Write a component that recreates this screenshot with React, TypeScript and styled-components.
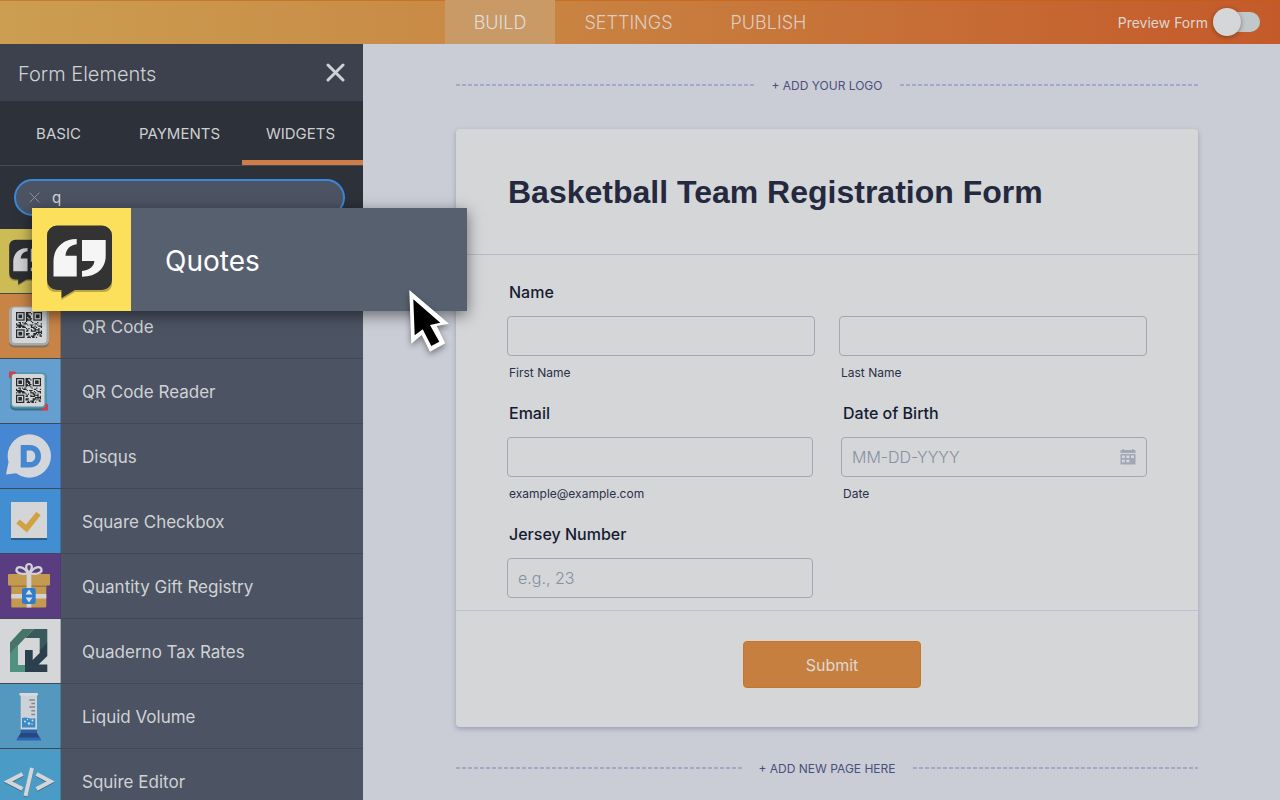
import React from "react";
import styled, { createGlobalStyle } from "styled-components";

const GlobalStyle = createGlobalStyle`
  *, *::before, *::after { box-sizing: border-box; }
  body {
    margin: 0;
    background: #cacdd6;
    font-family: Inter, "Liberation Sans", sans-serif;
    color: #161b33;
  }
  button, input { font: inherit; }
`;

/* ---------- Page ---------- */

const Page = styled.div`
  position: relative;
  display: flex;
  flex-direction: column;
  height: 100vh;
  overflow: hidden;
`;

const Body = styled.div`
  display: flex;
  flex: 1;
  min-height: 0;
`;

/* ---------- Top bar ---------- */

const TopBar = styled.header`
  flex: none;
  display: grid;
  grid-template-columns: 1fr auto 1fr;
  height: 44px;
  background: linear-gradient(90deg, #cb9e51 0%, #c98c46 32%, #c77238 66%, #c45a2a 100%);
  box-shadow: inset 0 1px 0 rgba(200, 90, 10, 0.5);
`;

const Nav = styled.nav`
  grid-column: 2;
  display: flex;
`;

const NavLink = styled.a<{ $active?: boolean }>`
  display: flex;
  align-items: center;
  padding: 0 29px;
  font-size: 18px;
  font-weight: 300;
  color: ${(p) => (p.$active ? "#dfdddb" : "#dccdc0")};
  background: ${(p) => (p.$active ? "#c99a66" : "transparent")};
  text-decoration: none;
`;

const Preview = styled.label`
  justify-self: end;
  display: flex;
  align-items: center;
  gap: 5px;
  padding-right: 20px;
  font-size: 14px;
  color: #ddd5d0;
`;

const Toggle = styled.input`
  appearance: none;
  display: flex;
  align-items: center;
  width: 47px;
  height: 28px;
  margin: 0;

  &::before {
    content: "";
    z-index: 1;
    flex: none;
    width: 28px;
    height: 28px;
    border-radius: 50%;
    background: #d5d6d7;
    box-shadow: 0 1px 4px rgba(60, 30, 10, 0.5);
  }

  &::after {
    content: "";
    flex: none;
    width: 38px;
    height: 20px;
    margin-left: -19px;
    border-radius: 10px;
    background: #c1c8ca;
    box-shadow: 0 0 1px #b08030;
  }
`;

/* ---------- Side panel ---------- */

const Panel = styled.aside`
  flex: none;
  display: flex;
  flex-direction: column;
  width: 363px;
  background: #2d3139;
  overflow: hidden;
`;

const PanelHead = styled.div`
  flex: none;
  display: flex;
  align-items: center;
  justify-content: space-between;
  height: 57px;
  padding: 0 18px;
  background: #3c414d;
  color: #cfd1d4;
`;

const PanelTitle = styled.h2`
  margin: 0;
  font-size: 20px;
  font-weight: 300;
  padding-top: 2px;
`;

const IconButton = styled.button`
  display: flex;
  padding: 0;
  border: 0;
  background: none;
  color: inherit;
`;

const Tabs = styled.div`
  flex: none;
  display: grid;
  grid-template-columns: repeat(3, 1fr);
  height: 65px;
  border-bottom: 1px solid #454b57;
`;

const Tab = styled.button<{ $active?: boolean }>`
  padding: 5px 4px 0 0;
  border: 0;
  border-bottom: 5px solid ${(p) => (p.$active ? "#cd7d45" : "transparent")};
  background: none;
  color: #cdcfd1;
  font-size: 15px;
`;

const SearchArea = styled.div`
  flex: none;
  padding: 13px 18px 13px 14px;
`;

const SearchBox = styled.div`
  display: flex;
  align-items: center;
  gap: 11px;
  height: 37px;
  padding: 0 14px 0 12px;
  border: 2px solid #3b88d8;
  border-radius: 19px;
  background: #4c5362;
  color: #8b93a1;
`;

const SearchInput = styled.input`
  flex: 1;
  min-width: 0;
  padding: 0;
  border: 0;
  outline: 0;
  background: none;
  color: #d3d5d8;
  font-size: 15px;
`;

const List = styled.ul`
  margin: 0;
  padding: 0;
  list-style: none;
`;

const Row = styled.li`
  display: flex;
  align-items: center;
  height: 65px;
  border-bottom: 1px solid #424854;
  background: #4c5362;
  color: #d0d2d5;
  font-size: 17px;
`;

const RowName = styled.span`
  padding-top: 2px;
`;

const Tile = styled.span<{ $bg: string }>`
  flex: none;
  display: flex;
  width: 61px;
  height: 64px;
  margin-right: 21px;
  background: ${(p) => p.$bg};
  border-right: 1px solid rgba(50, 56, 68, 0.3);

  svg { flex: none; }
`;

/* ---------- Canvas ---------- */

const Canvas = styled.main`
  flex: 1;
  display: flex;
  flex-direction: column;
  min-width: 0;
  padding: 31px 82px 20px 93px;
  overflow: hidden;
`;

const AddButton = styled.button`
  display: flex;
  align-items: center;
  gap: 17px;
  width: 100%;
  height: 20px;
  padding: 0;
  border: 0;
  background: none;
  color: #4b4f7c;
  font-size: 12px;
  white-space: nowrap;

  &::before,
  &::after {
    content: "";
    flex: 1;
    height: 2px;
    background: repeating-linear-gradient(90deg, #a6a8c8 0 4px, transparent 4px 6px);
  }
`;

const FormCard = styled.form`
  flex: none;
  margin: 34px 0 31px;
  border-radius: 4px;
  background: #d4d6d7;
  box-shadow: 0 2px 5px rgba(84, 86, 130, 0.4);
`;

const FormHead = styled.div`
  display: flex;
  align-items: center;
  height: 126px;
  padding: 0 52px;
  border-bottom: 1px solid #b7bac4;
`;

const FormTitle = styled.h1`
  margin: 0;
  font-family: "Liberation Sans", Arial, sans-serif;
  font-size: 32px;
  line-height: 40px;
  font-weight: 700;
  color: #24293f;
`;

const Fields = styled.div`
  display: flex;
  flex-direction: column;
  gap: 21px;
  padding: 27px 51px 12px;
  border-bottom: 1px solid #bfc0cf;
`;

const FieldRow = styled.div<{ $gap: number }>`
  display: grid;
  grid-template-columns: 1fr 1fr;
  column-gap: ${(p) => p.$gap}px;
`;

const NameGroup = styled.fieldset`
  margin: 0;
  padding: 0;
  border: 0;
  min-width: 0;
`;

const Field = styled.div`
  display: flex;
  flex-direction: column;
`;

const labelStyle = `
  display: block;
  margin-bottom: 14px;
  padding: 0 2px;
  font-size: 16px;
  line-height: 20px;
  font-weight: 500;
  color: #161b33;
`;

const Label = styled.label`${labelStyle}`;
const Legend = styled.legend`${labelStyle}`;

const InputBox = styled.div`
  display: flex;
  align-items: center;
  height: 40px;
  padding: 0 10px;
  border: 1px solid #a3a7b4;
  border-radius: 4px;
  color: #a0a7b7;
`;

const TextInput = styled.input`
  flex: 1;
  min-width: 0;
  padding: 0;
  border: 0;
  outline: 0;
  background: none;
  color: #161b33;
  font-size: 16px;

  &::placeholder { color: #8790a4; opacity: 1; font-weight: 300; }
`;

const Hint = styled.label`
  margin-top: 8px;
  padding: 0 2px;
  font-size: 12px;
  line-height: 18px;
  color: #2b304a;
`;

const FormFoot = styled.div`
  display: flex;
  justify-content: center;
  padding: 30px 0 39px 10px;
`;

const Submit = styled.button`
  width: 178px;
  height: 47px;
  padding: 0;
  border: 1px solid #c9762b;
  border-radius: 4px;
  background: #c77f3f;
  color: #ddd8d2;
  font-size: 16px;
`;

/* ---------- Dragged widget ---------- */

const DragCard = styled.div`
  position: absolute;
  left: 32px;
  top: 208px;
  display: flex;
  align-items: center;
  gap: 34px;
  width: 435px;
  height: 103px;
  background: #57606f;
  box-shadow: 0 4px 14px rgba(0, 0, 0, 0.5);
  color: #fff;
  font-size: 28px;
`;

const DragName = styled.span`
  padding-top: 3px;
`;

const DragTile = styled.span`
  display: flex;
  width: 99px;
  height: 103px;
  background: #fcdf5a;
`;

const Cursor = styled.svg`
  position: absolute;
  left: 400px;
  top: 282px;
  filter: drop-shadow(0 3px 3px rgba(0, 0, 0, 0.4));
`;

/* ---------- Drawings ---------- */

function QuoteMark({ width, dim }: { width: number; dim?: boolean }) {
  const dark = dim ? "#2c2e31" : "#333333";
  const light = dim ? "#cfd1d3" : "#f5f5f5";
  return (
    <svg width={width} height={(width * 103) / 99} viewBox="0 0 99 103" aria-hidden="true">
      <path d="M23 19H72A8 8 0 0 1 80 27V76A8 8 0 0 1 72 84H43L29.5 92V84H23A8 8 0 0 1 15 76V27A8 8 0 0 1 23 19Z" fill="#000" opacity="0.25" />
      <path d="M25 17.500H70A10 10 0 0 1 80 27.500V72A10 10 0 0 1 70 82H43L29.500 90V82H25A10 10 0 0 1 15 72V27.500A10 10 0 0 1 25 17.500Z" fill={dark} />
      <path d="M21.500 68.500H44.700V47.700H33.500C34 41 38 37 44.700 36.200V31C30 31 21.500 41 21.500 53Z" fill={light} />
      <path d="M50 32H73.700V48C73.700 60 65 68.700 50 68.700V63C58 62 62.300 58 62.300 53H50Z" fill={light} />
    </svg>
  );
}

const QR_SIZE = 21;

function qrPath() {
  let seed = 71;
  let d = "";
  const inFinder = (x: number, y: number) =>
    (x < 8 && y < 8) || (x >= QR_SIZE - 8 && y < 8) || (x < 8 && y >= QR_SIZE - 8);
  for (let y = 0; y < QR_SIZE; y++) {
    for (let x = 0; x < QR_SIZE; x++) {
      seed = (seed * 1103515245 + 12345) % 2147483648;
      if (!inFinder(x, y) && (seed >> 12) % 100 < 50) d += `M${x} ${y}h1v1h-1z`;
    }
  }
  return d;
}

const QR_DATA = qrPath();

function QrGlyph({ x, y, size }: { x: number; y: number; size: number }) {
  return (
    <svg x={x} y={y} width={size} height={size} viewBox="0 0 21 21">
      <path d={QR_DATA} fill="#24272b" />
      {[[0, 0], [14, 0], [0, 14]].map(([fx, fy]) => (
        <g key={`${fx}-${fy}`}>
          <rect x={fx + 0.5} y={fy + 0.5} width="6" height="6" fill="none" stroke="#24272b" strokeWidth="1" />
          <rect x={fx + 2} y={fy + 2} width="3" height="3" fill="#24272b" />
        </g>
      ))}
    </svg>
  );
}

function TileSvg({ children }: { children: React.ReactNode }) {
  return (
    <svg width="61" height="64" viewBox="0 0 61 64" aria-hidden="true">
      {children}
    </svg>
  );
}

const QrIcon = () => (
  <TileSvg>
    <rect x="9" y="13.500" width="40" height="40" rx="5" fill="#80705f" />
    <rect x="9" y="12.500" width="40" height="39" rx="5" fill="#a5a9ac" />
    <rect x="12" y="13.500" width="34.500" height="35.500" rx="3" fill="#d3d5d6" />
    <QrGlyph x={16} y={18} size={26} />
  </TileSvg>
);

const QrReaderIcon = () => (
  <TileSvg>
    <path d="M9 19V12.800H15.500V19ZM41.500 45H48V51.200H41.500Z" fill="#cf3f4c" />
    <rect x="10" y="14.500" width="37" height="37" rx="5" fill="#3a6c88" />
    <rect x="10" y="13.500" width="37" height="36" rx="5" fill="#4f93ab" />
    <rect x="12" y="15" width="32.500" height="32.500" rx="3" fill="#d3d5d6" />
    <QrGlyph x={16} y={19} size={25} />
    <path d="M9 19V12.800H15.500V15H11.500V19ZM48 45V51.200H41.500V49H45.500V45Z" fill="#cf3f4c" />
  </TileSvg>
);

const DisqusIcon = () => (
  <TileSvg>
    <path d="M8.500 38L6 50.500L18 49Z" fill="#d3d6da" />
    <circle cx="29.300" cy="32" r="21.700" fill="#d3d6da" />
    <path fillRule="evenodd" fill="#4786d0" d="M20.700 21H29.500C36.500 21 41 25.500 41 32.200C41 39 36.500 43.500 29.500 43.500H20.700ZM26.700 26.500V38H29.500C33 38 35.300 36 35.300 32.200C35.300 28.500 33 26.500 29.500 26.500Z" />
  </TileSvg>
);

const CheckIcon = () => (
  <TileSvg>
    <rect x="11" y="14.500" width="36" height="36.500" fill="#2c5f86" />
    <rect x="11" y="13" width="36" height="36" fill="#d3d5d6" />
    <path d="M18 32.500L26.500 39.500L38.500 24.500" fill="none" stroke="#d0a242" strokeWidth="5.500" />
  </TileSvg>
);

const GiftIcon = () => (
  <TileSvg>
    <rect x="11.300" y="30" width="35" height="23.500" rx="1" fill="#c49a51" />
    <rect x="11.300" y="30" width="35" height="3" fill="#9c7840" />
    <rect x="8" y="20" width="42" height="11.500" rx="1" fill="#c49a51" />
    <path d="M11.300 40H46.300V44.500H11.300ZM26.700 19H31.300V53.500H26.700Z" fill="#d3d3d6" />
    <g fill="none" stroke="#d3d3d6" strokeWidth="2.200">
      <path d="M29 19C24.500 14 26 10 29 10C32 10 33.500 14 29 19Z" />
      <path d="M28 19.500C24 12 17.500 12 16.500 15.500C15.500 19 22 20.500 28 19.500Z" />
      <path d="M30 19.500C34 12 40.500 12 41.500 15.500C42.500 19 36 20.500 30 19.500Z" />
    </g>
    <rect x="22" y="34" width="13.700" height="16" rx="2" fill="#2f7cca" />
    <path d="M29 35.500L32.500 40.500H25.500ZM29 48.500L32.500 43.500H25.500Z" fill="#d9dce0" />
  </TileSvg>
);

const QuadernoIcon = () => (
  <TileSvg>
    <path d="M10 53V34L18 26.500V46H25V53Z" fill="#509280" />
    <path d="M10 34.500V23.500L22.500 10H34L25 19L18 26.500Z" fill="#477469" />
    <path d="M34 10H47.300V24L39.700 31.500V19H25Z" fill="#385a5c" />
    <path d="M47.300 23.500V37L38.500 45.500H47.300V53H25V31H32.700V41L39.700 34V31Z" fill="#2c3f4c" />
  </TileSvg>
);

const LiquidIcon = () => (
  <TileSvg>
    <rect x="20.700" y="11" width="16.300" height="35" fill="#cdd2d8" />
    <rect x="19.300" y="9" width="18.700" height="2.500" rx="1" fill="#d9dadc" />
    <path d="M29.300 16H35M31.300 19.500H35M29.300 23H35M31.300 26.700H35M31.300 30.500H35" stroke="#82878e" strokeWidth="1.500" />
    <path d="M22 34Q25 32.800 28.500 34T35.300 34V43.500H22Z" fill="#3a8ac8" />
    <g fill="#d3e0ea">
      <circle cx="25" cy="37.500" r="1" />
      <circle cx="29" cy="39.500" r="1.200" />
      <circle cx="32.500" cy="36.500" r="1" />
      <circle cx="27.500" cy="35.500" r="0.700" />
      <circle cx="32" cy="40" r="0.700" />
    </g>
    <rect x="20.700" y="45.500" width="16.300" height="4" fill="#2c5da6" />
    <path d="M20.700 49H37L41 55.500H16.700Z" fill="#24497f" />
    <path d="M18.200 53.500H39.700L41 55.500V56.500H16.700V55.500Z" fill="#2f66b4" />
  </TileSvg>
);

const SquireIcon = () => (
  <TileSvg>
    <g fill="none" strokeWidth="4">
      <path d="M22.500 26L8 33.500L22.500 41M36.500 26L50.500 33.500L36.500 41M32 20L25.500 48" stroke="#39708c" />
      <path d="M22.500 25L8 32.500L22.500 40M36.500 25L50.500 32.500L36.500 40M32 19L25.500 47" stroke="#d3d5d7" />
    </g>
  </TileSvg>
);

const Cross = ({ size, stroke }: { size: number; stroke: number }) => (
  <svg width={size} height={size} viewBox={`0 0 ${size} ${size}`} aria-hidden="true">
    <path
      d={`M2 2L${size - 2} ${size - 2}M${size - 2} 2L2 ${size - 2}`}
      stroke="currentColor"
      strokeWidth={stroke}
      strokeLinecap="round"
    />
  </svg>
);

const CalendarIcon = () => (
  <svg width="16" height="16" viewBox="0 0 16 16" fill="currentColor" aria-hidden="true">
    <path d="M2.500 0H4V1H12V0H13.500V1H15.500V4H0.500V1H2.500Z" />
    <path
      fillRule="evenodd"
      d="M0.500 5H15.500V15.500H0.500ZM2 6.500V9H4.800V6.500ZM6.300 6.500V9H9.500V6.500ZM11 6.500V9H14V6.500ZM2 10.700V13.300H4.800V10.700ZM6.300 10.700V13.300H9.500V10.700Z"
    />
  </svg>
);

const widgets = [
  { name: "Quotes", bg: "#cdbc56", icon: <QuoteMark width={61} dim /> },
  { name: "QR Code", bg: "#c88447", icon: <QrIcon /> },
  { name: "QR Code Reader", bg: "#649fd0", icon: <QrReaderIcon /> },
  { name: "Disqus", bg: "#4786d0", icon: <DisqusIcon /> },
  { name: "Square Checkbox", bg: "#418fd2", icon: <CheckIcon /> },
  { name: "Quantity Gift Registry", bg: "#5a3c80", icon: <GiftIcon /> },
  { name: "Quaderno Tax Rates", bg: "#d4d6d8", icon: <QuadernoIcon /> },
  { name: "Liquid Volume", bg: "#5498bf", icon: <LiquidIcon /> },
  { name: "Squire Editor", bg: "#4a9cc6", icon: <SquireIcon /> },
];

/* The widget being dragged shows its name on the drag card instead of in its row. */
const dragged = "Quotes";

export default function App() {
  return (
    <Page>
      <GlobalStyle />
      <TopBar>
        <Nav>
          <NavLink href="#build" $active>BUILD</NavLink>
          <NavLink href="#settings">SETTINGS</NavLink>
          <NavLink href="#publish">PUBLISH</NavLink>
        </Nav>
        <Preview>
          Preview Form
          <Toggle type="checkbox" role="switch" />
        </Preview>
      </TopBar>
      <Body>
        <Panel>
          <PanelHead>
            <PanelTitle>Form Elements</PanelTitle>
            <IconButton type="button" aria-label="Close">
              <Cross size={19} stroke={3} />
            </IconButton>
          </PanelHead>
          <Tabs role="tablist">
            <Tab type="button" role="tab">BASIC</Tab>
            <Tab type="button" role="tab">PAYMENTS</Tab>
            <Tab type="button" role="tab" aria-selected="true" $active>WIDGETS</Tab>
          </Tabs>
          <SearchArea>
            <SearchBox>
              <IconButton type="button" aria-label="Clear search">
                <Cross size={13} stroke={1} />
              </IconButton>
              <SearchInput type="text" aria-label="Search widgets" defaultValue="q" />
            </SearchBox>
          </SearchArea>
          <List>
            {widgets.map((w) => (
              <Row key={w.name}>
                <Tile $bg={w.bg}>{w.icon}</Tile>
                {w.name !== dragged && <RowName>{w.name}</RowName>}
              </Row>
            ))}
          </List>
        </Panel>
        <Canvas>
          <AddButton type="button">+ ADD YOUR LOGO</AddButton>
          <FormCard>
            <FormHead>
              <FormTitle>Basketball Team Registration Form</FormTitle>
            </FormHead>
            <Fields>
              <NameGroup>
                <Legend>Name</Legend>
                <FieldRow $gap={24}>
                  <Field>
                    <InputBox><TextInput id="first" type="text" /></InputBox>
                    <Hint htmlFor="first">First Name</Hint>
                  </Field>
                  <Field>
                    <InputBox><TextInput id="last" type="text" /></InputBox>
                    <Hint htmlFor="last">Last Name</Hint>
                  </Field>
                </FieldRow>
              </NameGroup>
              <FieldRow $gap={28}>
                <Field>
                  <Label htmlFor="email">Email</Label>
                  <InputBox><TextInput id="email" type="email" /></InputBox>
                  <Hint htmlFor="email">example@example.com</Hint>
                </Field>
                <Field>
                  <Label htmlFor="dob">Date of Birth</Label>
                  <InputBox>
                    <TextInput id="dob" type="text" placeholder="MM-DD-YYYY" />
                    <CalendarIcon />
                  </InputBox>
                  <Hint htmlFor="dob">Date</Hint>
                </Field>
              </FieldRow>
              <FieldRow $gap={28}>
                <Field>
                  <Label htmlFor="jersey">Jersey Number</Label>
                  <InputBox><TextInput id="jersey" type="text" placeholder="e.g., 23" /></InputBox>
                </Field>
              </FieldRow>
            </Fields>
            <FormFoot>
              <Submit type="button">Submit</Submit>
            </FormFoot>
          </FormCard>
          <AddButton type="button">+ ADD NEW PAGE HERE</AddButton>
        </Canvas>
      </Body>
      <DragCard>
        <DragTile><QuoteMark width={99} /></DragTile>
        <DragName>{dragged}</DragName>
      </DragCard>
      <Cursor width="60" height="76" viewBox="0 0 60 76" aria-hidden="true">
        <path d="M9.300 8L49 41.700L36.700 44L45.300 61.300L30 69.700L21.700 53L11.300 61.700Z" fill="#fff" />
        <path d="M13.300 17.300L40.300 40.700L30 43L39.300 59.700L31.300 64L22.700 47.300L14.700 53.300Z" fill="#000" />
      </Cursor>
    </Page>
  );
}
